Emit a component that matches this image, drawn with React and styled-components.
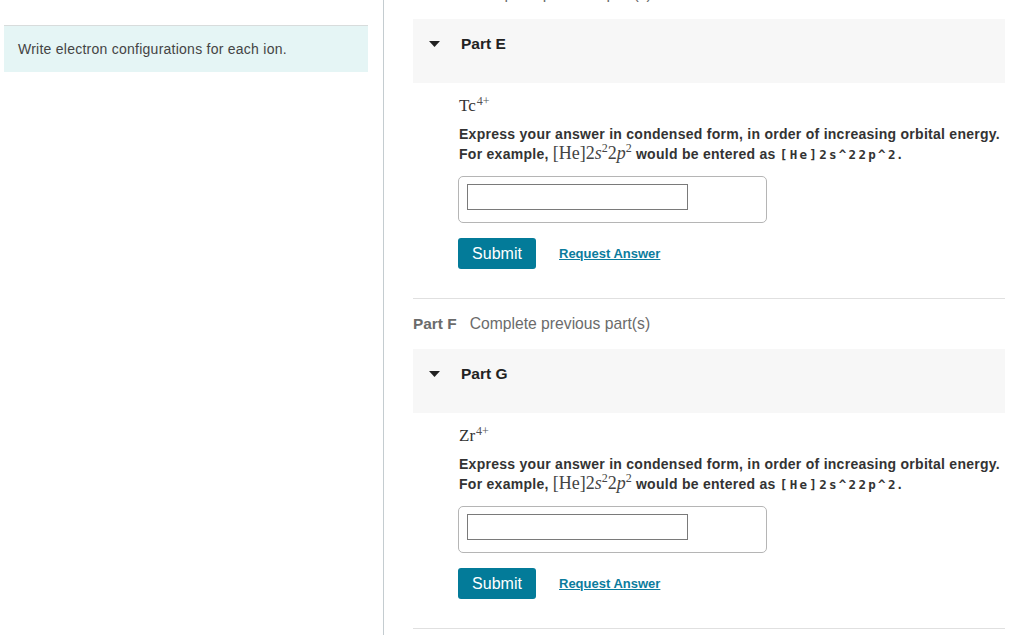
import React from "react"
import styled, { createGlobalStyle } from "styled-components"

const GlobalStyle = createGlobalStyle`
  html, body {
    margin: 0;
    padding: 0;
    height: 100%;
    background: #fff;
    overflow: hidden;
  }
  body {
    font-family: "Liberation Sans", Arial, sans-serif;
    color: #333;
  }
`

const Page = styled.div`
  display: grid;
  grid-template-columns: 384px 1fr;
  height: 635px;
  overflow: hidden;
`

const Side = styled.aside`
  border-right: 1px solid #c4ccd0;
  padding-top: 25px;
`

const Prompt = styled.div`
  margin: 0 15px 0 4px;
  background: #e5f5f5;
  border-top: 1px solid #d8dcdc;
  height: 46px;
  display: flex;
  align-items: center;
  padding-left: 14px;
  font-size: 14px;
  letter-spacing: 0.25px;
  color: #444;
`

const Main = styled.main`
  padding: 0 26px 0 29px;
`

const Collapsed = styled.div`
  display: flex;
  gap: 13px;
  align-items: center;
  padding: 15px 0;
  line-height: 20px;
  font-size: 15.7px;
  color: #6b6b6b;
  margin-top: ${({ $first }) => ($first ? "-31px" : "0")};
`

const CollapsedLabel = styled.span`
  font-weight: bold;
  font-size: 15.4px;
`

const Header = styled.div`
  background: #f7f7f7;
  height: 64px;
  box-sizing: border-box;
  padding: 15px 0 0 16px;
  display: flex;
  align-items: flex-start;
  line-height: 20px;
  font-size: 15.5px;
  font-weight: bold;
  color: #222;
`

const Caret = styled.svg`
  width: 11px;
  height: 6px;
  margin-top: 7px;
  margin-right: 21px;
`

const Body = styled.div`
  padding: 12px 0 0 45px;
`

const Ion = styled.div`
  font-family: "Liberation Serif", "Times New Roman", serif;
  font-size: 17px;
  line-height: 20px;
  color: #333;
  margin: 1px 0 8px 1px;
  sup {
    font-size: 12px;
    color: #555;
    vertical-align: 6px;
    line-height: 0;
    margin-left: 1px;
  }
`

const Instructions = styled.p`
  margin: 0 0 0 1px;
  font-size: 14px;
  font-weight: bold;
  letter-spacing: 0.27px;
  line-height: 20px;
  color: #333;
`

const Math = styled.span`
  font-family: "Liberation Serif", "Times New Roman", serif;
  font-weight: normal;
  font-size: 18px;
  line-height: 0;
  letter-spacing: 0;
  color: #444;
  i {
    font-style: italic;
  }
  sup {
    font-size: 12px;
    vertical-align: 7px;
    line-height: 0;
  }
`

const Code = styled.code`
  font-family: "DejaVu Sans Mono", "Liberation Mono", monospace;
  font-size: 12.5px;
  line-height: 0;
  letter-spacing: 2.3px;
  font-weight: bold;
`

const AnswerBox = styled.div`
  margin-top: 12px;
  width: 309px;
  height: 47px;
  box-sizing: border-box;
  border: 1px solid #b5b5b5;
  border-radius: 5px;
  padding: 7px 0 0 8px;
`

const Input = styled.input`
  display: block;
  width: 221px;
  height: 26px;
  box-sizing: border-box;
  border: 1px solid #7a7a7a;
  margin: 0;
  padding: 0 4px;
  font-size: 14px;
  background: #fff;
  outline: none;
`

const Actions = styled.div`
  display: flex;
  align-items: center;
  gap: 23px;
  margin-top: 15px;
  padding-bottom: 29px;
`

const SubmitButton = styled.button`
  background: #037b99;
  color: #fff;
  border: none;
  border-radius: 3px;
  width: 78px;
  height: 31px;
  padding: 0;
  font-family: "Liberation Sans", Arial, sans-serif;
  font-size: 16px;
  cursor: pointer;
`

const RequestLink = styled.a`
  color: #0b7c9d;
  font-size: 13px;
  font-weight: bold;
  text-decoration: underline;
  cursor: pointer;
`

const Divider = styled.hr`
  margin: 0;
  border: none;
  border-top: 1px solid #e0e0e0;
`

const Example = () => (
  <Instructions>
    Express your answer in condensed form, in order of increasing orbital energy.
    <br />
    For example,{" "}
    <Math>
      [He]2<i>s</i>
      <sup>2</sup>2<i>p</i>
      <sup>2</sup>
    </Math>{" "}
    would be entered as <Code>[He]2s^22p^2</Code>.
  </Instructions>
)

const OpenPart = ({ label, ion }) => (
  <>
    <Header>
      <Caret viewBox="0 0 11 6">
        <path d="M0 0 H11 L5.5 6 Z" fill="#222" />
      </Caret>
      {label}
    </Header>
    <Body>
      <Ion>
        {ion}
        <sup>4+</sup>
      </Ion>
      <Example />
      <AnswerBox>
        <Input type="text" />
      </AnswerBox>
      <Actions>
        <SubmitButton>Submit</SubmitButton>
        <RequestLink>Request Answer</RequestLink>
      </Actions>
    </Body>
    <Divider />
  </>
)

export default function App() {
  return (
    <>
      <GlobalStyle />
      <Page>
        <Side>
          <Prompt>Write electron configurations for each ion.</Prompt>
        </Side>
        <Main>
          <Collapsed $first>
            <CollapsedLabel>Part D</CollapsedLabel>
            Complete previous part(s)
          </Collapsed>
          <OpenPart label="Part E" ion="Tc" />
          <Collapsed>
            <CollapsedLabel>Part F</CollapsedLabel>
            Complete previous part(s)
          </Collapsed>
          <OpenPart label="Part G" ion="Zr" />
        </Main>
      </Page>
    </>
  )
}
